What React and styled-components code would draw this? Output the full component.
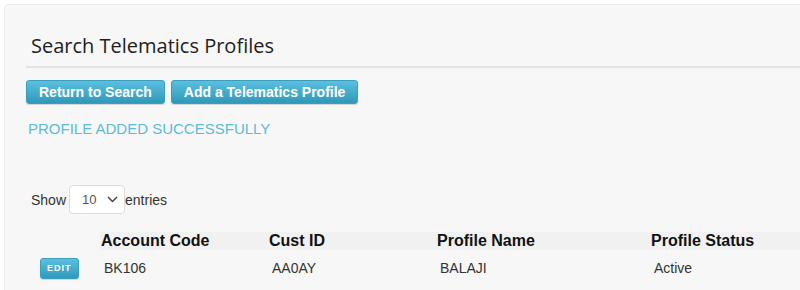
import React from "react";
import styled, {createGlobalStyle} from "styled-components";

const Global = createGlobalStyle`
  html, body {
    margin: 0;
    padding: 0;
    background: #fff;
    overflow: hidden;
  }
  body {
    font-family: "Liberation Sans", Arial, sans-serif;
    color: #333;
  }
`;

const Panel = styled.div`
  margin: 4px 0 0 4px;
  width: 796px;
  height: 286px;
  box-sizing: border-box;
  background: #f7f7f7;
  border: 1px solid #ececec;
  border-right: none;
  border-bottom: none;
  border-radius: 5px 0 0 0;
  padding: 0 0 0 21px;
  overflow: hidden;
`;

const Header = styled.div`
  padding: 27px 0 0 5px;
  height: 34px;
  border-bottom: 2px solid #e4e4e4;
`;

const Title = styled.h1`
  margin: 0;
  font-family: "Open Sans", "Noto Sans", sans-serif;
  font-weight: 400;
  font-size: 20px;
  line-height: 27px;
  color: #222;
`;

const Toolbar = styled.div`
  display: flex;
  gap: 6px;
  margin-top: 12px;
`;

const Button = styled.button`
  height: ${p => p.$small ? "21px" : "24px"};
  padding: ${p => p.$small ? "0 6px" : "0 12px"};
  border: 1px solid #3a9ebd;
  border-radius: 3px;
  background: linear-gradient(#5cbfdf, #2f99b9);
  color: #fff;
  font-family: "Liberation Sans", Arial, sans-serif;
  font-weight: 700;
  font-size: ${p => p.$small ? "9px" : "14px"};
  letter-spacing: ${p => p.$small ? "1px" : "0"};
  box-shadow: 0 1px 1px rgba(0, 0, 0, 0.15);
  cursor: pointer;
`;

const Message = styled.div`
  margin: 16px 0 0 2px;
  font-size: 15px;
  line-height: 18px;
  color: #5bbbdc;
`;

const LengthRow = styled.div`
  display: flex;
  align-items: center;
  margin: 47px 0 0 5px;
  font-size: 14px;
  color: #333;
`;

const Select = styled.div`
  display: flex;
  align-items: center;
  justify-content: space-between;
  box-sizing: border-box;
  width: 56px;
  height: 29px;
  margin-left: 3px;
  padding: 0 6px 0 12px;
  background: #fff;
  border: 1px solid #dcdcdc;
  border-radius: 4px;
  color: #555;
  font-size: 13px;
`;

const Table = styled.table`
  margin-top: 18px;
  border-collapse: collapse;
  table-layout: fixed;
  width: 830px;
`;

const Th = styled.th`
  text-align: left;
  padding: 0 0 0 1px;
  height: 18px;
  font-size: 16px;
  line-height: 18px;
  font-weight: 700;
  color: #111;
  background: ${p => p.$blank ? "transparent" : "#f1f1f1"};
`;

const Td = styled.td`
  padding: 7px 0 0 4px;
  font-size: 14px;
  color: #333;
  vertical-align: middle;
`;

const EditCell = styled.td`
  padding: 7px 0 0 14px;
`;

function Chevron() {
  return (
    <svg width="11" height="7" viewBox="0 0 11 7" fill="none">
      <path d="M1 1l4.5 4.5L10 1" stroke="#444" strokeWidth="1.5"/>
    </svg>
  );
}

const rows = [
  {code: "BK106", cust: "AA0AY", name: "BALAJI", status: "Active"},
];

export default function App() {
  return (
    <>
      <Global/>
      <Panel>
        <Header>
          <Title>Search Telematics Profiles</Title>
        </Header>
        <Toolbar>
          <Button>Return to Search</Button>
          <Button>Add a Telematics Profile</Button>
        </Toolbar>
        <Message>PROFILE ADDED SUCCESSFULLY</Message>
        <LengthRow>
          Show
          <Select>10 <Chevron/></Select>
          entries
        </LengthRow>
        <Table>
          <colgroup>
            <col style={{width: 74}}/>
            <col style={{width: 168}}/>
            <col style={{width: 168}}/>
            <col style={{width: 214}}/>
            <col/>
          </colgroup>
          <thead>
            <tr>
              <Th $blank/>
              <Th>Account Code</Th>
              <Th>Cust ID</Th>
              <Th>Profile Name</Th>
              <Th>Profile Status</Th>
            </tr>
          </thead>
          <tbody>
            {rows.map(r => (
              <tr key={r.code}>
                <EditCell><Button $small>EDIT</Button></EditCell>
                <Td>{r.code}</Td>
                <Td>{r.cust}</Td>
                <Td>{r.name}</Td>
                <Td>{r.status}</Td>
              </tr>
            ))}
          </tbody>
        </Table>
      </Panel>
    </>
  );
}
